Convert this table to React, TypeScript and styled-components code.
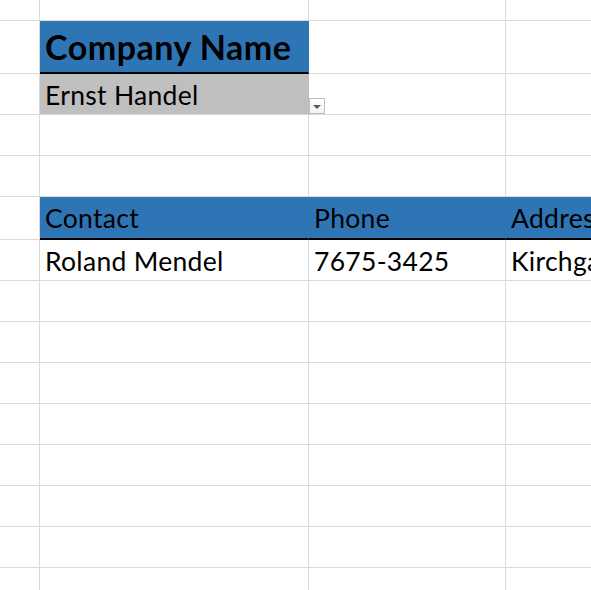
import React from "react";
import styled, { createGlobalStyle, css } from "styled-components";

const GlobalStyle = createGlobalStyle`
  html, body {
    margin: 0;
    padding: 0;
    background: #ffffff;
    overflow: hidden;
  }
  body {
    font-family: "Lato", "Open Sans", sans-serif;
  }
`;

const GRID = "#dadada";
const BLUE = "#2e75b6";
const GRAY = "#bfbfbf";

type Variant = "plain" | "title" | "selected" | "header";

const Viewport = styled.div`
  width: 591px;
  height: 590px;
  overflow: hidden;
  background: #fff;
`;

const Sheet = styled.div`
  display: grid;
  grid-template-columns: 40px 269px 197px 220px;
  grid-template-rows: 21px 53px 41px 41px 41px 43px 41px repeat(8, 41px);
  width: 726px;
`;

const Cell = styled.div<{ $variant: Variant }>`
  position: relative;
  box-sizing: border-box;
  display: flex;
  align-items: flex-end;
  padding: 0 0 6px 5px;
  white-space: nowrap;
  overflow: visible;
  border-right: 1px solid ${GRID};
  border-bottom: 1px solid ${GRID};
  color: #000;
  font-size: 26.5px;
  line-height: 26px;
  letter-spacing: 0.3px;
  min-width: 0;

  ${({ $variant }) =>
    $variant === "title" &&
    css`
      background: ${BLUE};
      border-right-color: ${BLUE};
      border-bottom: 2px solid #000;
      font-weight: 700;
      font-size: 34px;
      line-height: 33px;
      letter-spacing: 0.5px;
      padding-bottom: 9px;
    `}

  ${({ $variant }) =>
    $variant === "selected" &&
    css`
      background: ${GRAY};
      border-right-color: ${GRAY};
    `}

  ${({ $variant }) =>
    $variant === "header" &&
    css`
      background: ${BLUE};
      border-right-color: ${BLUE};
      border-bottom: 2px solid #000;
      padding-bottom: 7px;
    `}
`;

const DropButton = styled.div`
  position: absolute;
  left: calc(100% + 1px);
  bottom: 0;
  width: 16px;
  height: 16px;
  box-sizing: border-box;
  border: 1px solid #b7bfc4;
  background: linear-gradient(#ffffff, #eef3f5);
  display: flex;
  align-items: center;
  justify-content: center;
  z-index: 2;
`;

const Arrow = styled.span`
  width: 0;
  height: 0;
  margin-top: 2px;
  border-left: 4px solid transparent;
  border-right: 4px solid transparent;
  border-top: 4px solid #5a5a5a;
`;

type CellDef = { text?: string; variant?: Variant; dropdown?: boolean };

const rows: CellDef[][] = [
  [{}, {}, {}, {}],
  [{}, { text: "Company Name", variant: "title" }, {}, {}],
  [{}, { text: "Ernst Handel", variant: "selected", dropdown: true }, {}, {}],
  [{}, {}, {}, {}],
  [{}, {}, {}, {}],
  [
    {},
    { text: "Contact", variant: "header" },
    { text: "Phone", variant: "header" },
    { text: "Address", variant: "header" },
  ],
  [{}, { text: "Roland Mendel" }, { text: "7675-3425" }, { text: "Kirchgasse 6" }],
  ...Array.from({ length: 8 }, () => [{}, {}, {}, {}] as CellDef[]),
];

export default function App() {
  return (
    <>
      <GlobalStyle />
      <Viewport>
        <Sheet>
          {rows.map((row, r) =>
            row.map((c, i) => (
              <Cell key={`${r}-${i}`} $variant={c.variant ?? "plain"}>
                {c.text}
                {c.dropdown && (
                  <DropButton>
                    <Arrow />
                  </DropButton>
                )}
              </Cell>
            ))
          )}
        </Sheet>
      </Viewport>
    </>
  );
}
